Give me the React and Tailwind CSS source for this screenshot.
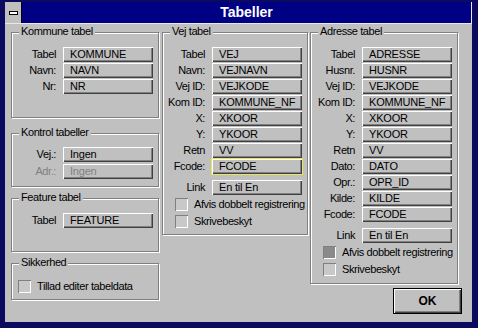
import React from "react";

const raised =
  "shadow-[inset_1px_1px_0_#fff,inset_-1px_-1px_0_#404040,inset_-2px_-2px_0_#808080]";

function Group({ title, className, children }) {
  return (
    <div
      className={`relative border border-[#808080] shadow-[inset_1px_1px_0_#fff,1px_1px_0_#fff] ${className}`}
    >
      <span className="absolute left-[7px] -top-[8px] bg-[#c0c0c0] px-[2px] leading-[13px] tracking-[-0.4px]">
        {title}
      </span>
      {children}
    </div>
  );
}

function Row({ label, value, dim, hl }) {
  return (
    <div className="flex h-[15px] items-center justify-end gap-[7px] pr-[5px]">
      <span className={`tracking-[-0.4px] ${dim ? "text-[#808080]" : ""}`}>{label}</span>
      <div
        className={`h-[15px] w-[90px] pl-[7px] leading-[15px] tracking-[-0.2px] ${raised} ${
          dim ? "text-[#808080]" : ""
        } ${hl ? "outline outline-1 outline-[#e6e65a]" : ""}`}
      >
        {value}
      </div>
    </div>
  );
}

function Check({ label, filled, className = "" }) {
  return (
    <div className={`flex h-[16px] items-center gap-[6px] ${className}`}>
      <div
        className={`h-[13px] w-[13px] shadow-[inset_1px_1px_0_#808080,inset_-1px_-1px_0_#fff] ${
          filled ? "bg-[#8a8a8a]" : "bg-[#c8c8c8]"
        }`}
      />
      <span className="tracking-[-0.4px]">{label}</span>
    </div>
  );
}

export default function App() {
  const vej = [
    ["Tabel", "VEJ"],
    ["Navn:", "VEJNAVN"],
    ["Vej ID:", "VEJKODE"],
    ["Kom ID:", "KOMMUNE_NF"],
    ["X:", "XKOOR"],
    ["Y:", "YKOOR"],
    ["Retn", "VV"],
  ];
  const adresse = [
    ["Tabel", "ADRESSE"],
    ["Husnr.", "HUSNR"],
    ["Vej ID:", "VEJKODE"],
    ["Kom ID:", "KOMMUNE_NF"],
    ["X:", "XKOOR"],
    ["Y:", "YKOOR"],
    ["Retn", "VV"],
    ["Dato:", "DATO"],
    ["Opr.:", "OPR_ID"],
    ["Kilde:", "KILDE"],
    ["Fcode:", "FCODE"],
  ];

  return (
    <div className="flex h-[328px] w-[478px] flex-col bg-[#0a0a5e] pb-[6px] pl-[5px] pr-[6px] pt-[2px] font-['Liberation_Sans',Arial,sans-serif] text-[11px] text-black">
      {/* title bar */}
      <div className="flex h-[22px] border-b border-r border-[#e8e8e8] bg-[#000084]">
        <div className="flex w-[17px] items-center justify-center border-r border-black bg-[#c0c0c0]">
          <div className="h-[4px] w-[9px] border border-black bg-white" />
        </div>
        <div className="flex flex-1 items-center justify-center text-[14px] font-bold text-white">
          Tabeller
        </div>
      </div>

      {/* client */}
      <div className="flex flex-1 gap-[3px] bg-[#c0c0c0] pl-[6px] pt-[8px]">
        {/* left column */}
        <div className="flex w-[148px] flex-col">
          <Group title="Kommune tabel" className="h-[86px] pt-[14px]">
            <div className="flex flex-col gap-[1px]">
              <Row label="Tabel" value="KOMMUNE" />
              <Row label="Navn:" value="NAVN" />
              <Row label="Nr:" value="NR" />
            </div>
          </Group>
          <Group title="Kontrol tabeller" className="mt-[15px] h-[54px] pt-[13px]">
            <div className="flex flex-col gap-[2px]">
              <Row label="Vej.:" value="Ingen" />
              <Row label="Adr.:" value="Ingen" dim />
            </div>
          </Group>
          <Group title="Feature tabel" className="mt-[11px] h-[54px] pt-[14px]">
            <Row label="Tabel" value="FEATURE" />
          </Group>
          <Group title="Sikkerhed" className="mt-[11px] h-[37px] pl-[6px] pt-[14px]">
            <Check label="Tillad editer tabeldata" />
          </Group>
        </div>

        {/* middle column */}
        <div className="w-[146px]">
          <Group title="Vej tabel" className="h-[203px] pt-[14px]">
            <div className="flex flex-col gap-[1px]">
              {vej.map(([l, v]) => (
                <Row key={l} label={l} value={v} />
              ))}
              <Row label="Fcode:" value="FCODE" hl />
              <div className="mt-[5px]">
                <Row label="Link" value="En til En" />
              </div>
              <Check label="Afvis dobbelt registrering" className="pl-[12px]" />
              <Check label="Skrivebeskyt" className="pl-[12px]" />
            </div>
          </Group>
        </div>

        {/* right column */}
        <div className="ml-[-1px] flex w-[152px] flex-col">
          <Group title="Adresse tabel" className="h-[252px] w-[148px] pt-[14px]">
            <div className="flex flex-col gap-[1px]">
              {adresse.map(([l, v]) => (
                <Row key={l} label={l} value={v} />
              ))}
              <div className="mt-[5px]">
                <Row label="Link" value="En til En" />
              </div>
              <Check label="Afvis dobbelt registrering" filled className="pl-[12px]" />
              <Check label="Skrivebeskyt" className="pl-[12px]" />
            </div>
          </Group>
          <button
            className={`ml-auto mt-[4px] h-[26px] w-[69px] border border-black text-[12px] font-bold ${raised}`}
          >
            OK
          </button>
        </div>
      </div>
    </div>
  );
}
